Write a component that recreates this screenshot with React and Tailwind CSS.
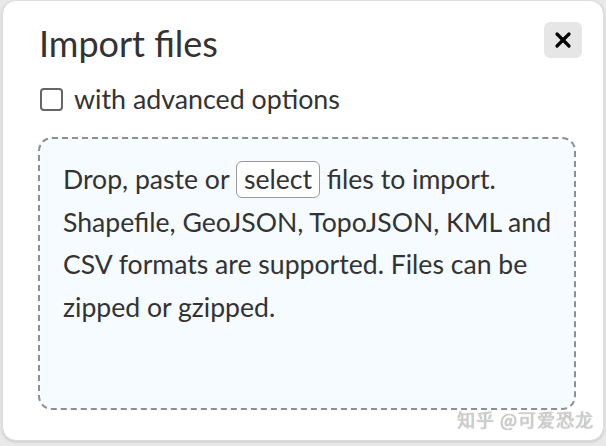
import { X } from "lucide-react";

const App = () => {
  return (
    <div className="h-[446px] w-[606px] overflow-hidden bg-[#e9e9e9]" style={{ fontFamily: "Lato, 'Noto Sans', sans-serif" }}>
      <div className="relative ml-[2px] h-[441px] w-[602px] rounded-[14px] border border-[#dedede] bg-white shadow-[0_1px_3px_rgba(0,0,0,0.15)]">
        <div className="flex items-start justify-between pl-[36px] pr-[21px] pt-[21px]">
          <h1 className="text-[36px] leading-[42px] text-[#333]">Import files</h1>
          <button className="flex h-[36px] w-[38px] items-center justify-center rounded-[6px] bg-[#e6e6e6]">
            <X size={24} strokeWidth={3.2} className="text-black" />
          </button>
        </div>
        <label className="mt-[22px] flex items-center gap-[11px] pl-[37px]">
          <span className="h-[23px] w-[23px] rounded-[4px] border-[2px] border-[#666] bg-white"></span>
          <span className="text-[26.8px] leading-[26px] text-[#333]">with advanced options</span>
        </label>
        <div className="ml-[35px] mt-[25px] h-[273px] w-[538px] rounded-[14px] border-[2px] border-dashed border-[#8f8f8f] bg-[#f5fbff] pl-[23px] pt-[19px]">
          <p className="whitespace-nowrap text-[26.6px] leading-[42.5px] text-[#333]">
            Drop, paste or{" "}
            <span className="inline-block rounded-[6px] border border-[#999] bg-white px-[7px] leading-[35px]">select</span>{" "}
            files to import.
            <br />
            Shapefile, GeoJSON, TopoJSON, KML and
            <br />
            CSV formats are supported. Files can be
            <br />
            zipped or gzipped.
          </p>
        </div>
        <div
          className="absolute left-[454px] top-[405px] whitespace-nowrap text-[18px] tracking-[1px] text-[#d0d0d0]"
          style={{ fontFamily: "'Noto Sans CJK SC', sans-serif", textShadow: "0 0 1px #999" }}
        >
          知乎 @可爱恐龙
        </div>
      </div>
    </div>
  );
};

export default App;
